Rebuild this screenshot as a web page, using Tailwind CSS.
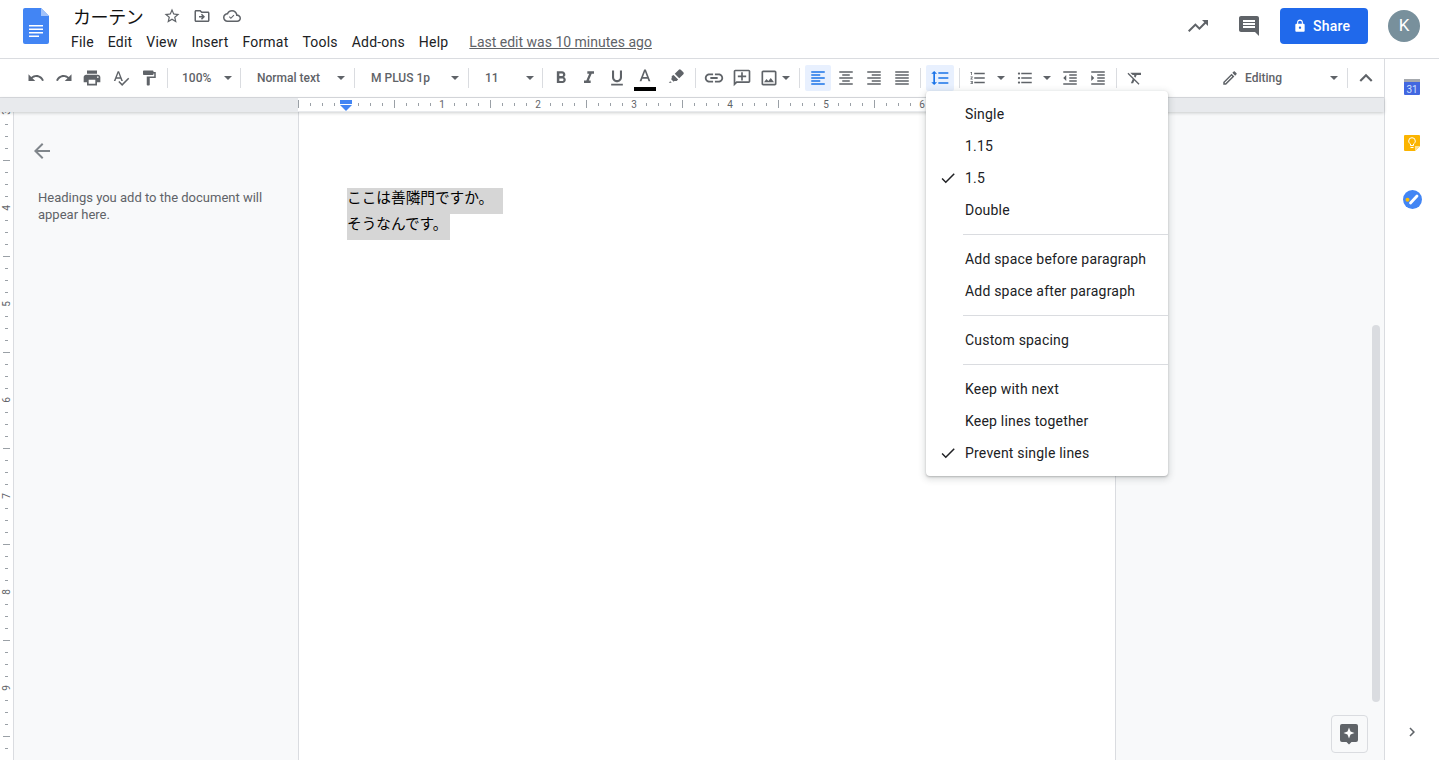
<!DOCTYPE html>
<html lang="en">
<head>
  <meta charset="UTF-8">
  <title>カーテン - Google Docs</title>
  <script src="https://cdn.jsdelivr.net/npm/@tailwindcss/browser@4"></script>
</head>
<body class="h-[760px] w-[1439px] overflow-hidden relative bg-white font-[Roboto,sans-serif] text-[#202124]">

  <!-- top bar -->
  <header class="h-[59px] border-b border-[#dadce0] flex items-start">
    <svg class="w-[26px] h-[36px] ml-[23px] mt-[8px] shrink-0" viewBox="0 0 26 36">
      <path fill="#4285f4" d="M2 0h16l8 8v26a2 2 0 0 1-2 2H2a2 2 0 0 1-2-2V2a2 2 0 0 1 2-2z"/>
      <path fill="#a1c2fa" d="M18 0l8 8h-8z"/>
      <path fill="#fff" d="M6 17h14v1.6H6zM6 20.5h14v1.6H6zM6 24h14v1.6H6zM6 27.5h10v1.6H6z"/>
    </svg>
    <div class="ml-[22px] shrink-0">
      <div class="flex items-center h-[32px]">
        <span class="text-[18px] leading-[30px] tracking-[-.4px] ml-[2px] w-[90px] font-['Noto_Sans_CJK_JP',sans-serif] text-[#111]">カーテン</span>
        <svg class="w-[18px] h-[18px] fill-[#5f6368]" viewBox="0 0 24 24"><path d="M22 9.24l-7.19-.62L12 2 9.19 8.63 2 9.24l5.46 4.73L5.82 21 12 17.27 18.18 21l-1.63-7.03L22 9.24zM12 15.4l-3.76 2.27 1-4.28-3.32-2.88 4.38-.38L12 6.1l1.71 4.04 4.38.38-3.32 2.88 1 4.28L12 15.4z"/></svg>
        <svg class="w-[18px] h-[18px] fill-[#5f6368] ml-[12px]" viewBox="0 0 24 24"><path d="M20 6h-8l-2-2H4c-1.1 0-2 .9-2 2v12c0 1.1.9 2 2 2h16c1.1 0 2-.9 2-2V8c0-1.1-.9-2-2-2zm0 12H4V6h5.17l2 2H20v10zM12.16 12H8v2h4.16l-1.6 1.59L12 17l4-4-4-4-1.41 1.41z"/></svg>
        <svg class="w-[18px] h-[18px] fill-[#5f6368] ml-[12px]" viewBox="0 0 24 24"><path d="M19.35 10.04C18.67 6.59 15.64 4 12 4 9.11 4 6.6 5.64 5.35 8.04 2.34 8.36 0 10.91 0 14c0 3.31 2.69 6 6 6h13c2.76 0 5-2.24 5-5 0-2.64-2.05-4.78-4.65-4.96zM19 18H6c-2.21 0-4-1.79-4-4s1.79-4 4-4h.71C7.37 7.69 9.48 6 12 6c3.04 0 5.5 2.46 5.5 5.5v.5H19c1.66 0 3 1.34 3 3s-1.34 3-3 3zM10.5 16l-2.6-2.6 1-1 1.6 1.6 3.6-3.6 1 1z"/></svg>
      </div>
      <nav class="flex items-center gap-[14px] text-[14px] tracking-[.2px] leading-[20px] text-[#202124]">
        <span>File</span><span>Edit</span><span>View</span><span>Insert</span><span>Format</span><span>Tools</span><span>Add-ons</span><span>Help</span>
        <span class="ml-[7px] text-[#5f6368] underline tracking-normal">Last edit was 10 minutes ago</span>
      </nav>
    </div>
    <div class="ml-auto flex items-center h-[36px] mt-[8px]">
      <svg class="w-[24px] h-[24px] fill-[#5f6368]" viewBox="0 0 24 24"><path d="M16 6l2.29 2.29-4.88 4.88-4-4L2 16.59 3.41 18l6-6 4 4 6.3-6.29L22 12V6z"/></svg>
      <svg class="w-[24px] h-[24px] fill-[#5f6368] ml-[27px]" viewBox="0 0 24 24"><path d="M21.99 4c0-1.1-.89-2-1.99-2H4c-1.1 0-2 .9-2 2v12c0 1.1.9 2 2 2h14l4 4-.01-18zM18 14H6v-2h12v2zm0-3H6V9h12v2zm0-3H6V6h12v2z"/></svg>
      <button class="ml-[19px] w-[88px] h-[36px] rounded-[4px] bg-[#2069eb] text-white text-[14px] font-medium tracking-[.2px] flex items-center pl-[13px]">
        <svg class="w-[14px] h-[14px] fill-white mr-[6px]" viewBox="0 0 24 24"><path d="M18 8h-1V6c0-2.76-2.24-5-5-5S7 3.24 7 6v2H6c-1.1 0-2 .9-2 2v10c0 1.1.9 2 2 2h12c1.1 0 2-.9 2-2V10c0-1.1-.9-2-2-2zm-6 9c-1.1 0-2-.9-2-2s.9-2 2-2 2 .9 2 2-.9 2-2 2zm3.100-9H8.900V6c0-1.710 1.390-3.100 3.100-3.100 1.710 0 3.100 1.390 3.100 3.100v2z"/></svg>
        Share
      </button>
      <div class="ml-[20px] mr-[19px] w-[32px] h-[32px] rounded-full bg-[#78909c] text-white text-[17px] flex items-center justify-center">K</div>
    </div>
  </header>

  <div class="flex h-[701px]">
    <div class="w-[1384px] shrink-0 flex flex-col">

      <!-- toolbar -->
      <div class="h-[39px] pb-[1px] flex items-center pl-[22px] text-[12px] font-medium text-[#5f6368] border-b border-[#dadce0]">
        <div class="w-[28px] flex justify-center"><svg class="w-[18px] h-[18px] fill-[#5f6368]" viewBox="0 0 24 24"><path d="M12.5 8c-2.65 0-5.05.99-6.9 2.600L2 7v9h9l-3.620-3.620c1.390-1.160 3.160-1.880 5.120-1.880 3.540 0 6.550 2.310 7.600 5.500l2.370-.780C21.080 11.030 17.150 8 12.500 8z"/></svg></div>
        <div class="w-[28px] flex justify-center"><svg class="w-[18px] h-[18px] fill-[#5f6368]" viewBox="0 0 24 24"><path d="M18.400 10.600C16.550 8.990 14.150 8 11.500 8c-4.650 0-8.580 3.030-9.960 7.220L3.900 16c1.050-3.190 4.050-5.500 7.600-5.500 1.950 0 3.730.72 5.120 1.880L13 16h9V7l-3.600 3.600z"/></svg></div>
        <div class="w-[28px] flex justify-center"><svg class="w-[20px] h-[20px] fill-[#5f6368]" viewBox="0 0 24 24"><path d="M19 8H5c-1.660 0-3 1.340-3 3v6h4v4h12v-4h4v-6c0-1.660-1.340-3-3-3zm-3 11H8v-5h8v5zm3-7c-.55 0-1-.45-1-1s.45-1 1-1 1 .45 1 1-.45 1-1 1zm-1-9H6v4h12V3z"/></svg></div>
        <div class="w-[28px] ml-[1px] flex justify-center"><svg class="w-[18px] h-[18px] fill-[#5f6368]" viewBox="0 0 24 24"><path d="M12.450 16h2.090L9.430 3H7.570L2.460 16h2.090l1.120-3h5.640l1.140 3zm-6.020-5L8.500 5.480 10.570 11H6.430zm15.160.59l-8.090 8.090L9.830 16l-1.410 1.410 5.090 5.090L23 13l-1.410-1.410z"/></svg></div>
        <div class="w-[28px] flex justify-center"><svg class="w-[18px] h-[18px] fill-[#5f6368]" viewBox="0 0 24 24"><path d="M18 4V3c0-.55-.45-1-1-1H5c-.55 0-1 .45-1 1v4c0 .55.45 1 1 1h12c.55 0 1-.45 1-1V6h1v4H9v11c0 .55.45 1 1 1h2c.55 0 1-.45 1-1v-9h8V4h-3z"/></svg></div>
        <div class="w-px h-[20px] bg-[#dadce0] ml-[4px]"></div>
        <div class="w-[72px] flex items-center justify-between pl-[14px] pr-[8px]"><span>100%</span><i class="w-0 h-0 border-x-[4px] border-t-[4px] border-x-transparent border-t-[#5f6368]"></i></div>
        <div class="w-px h-[20px] bg-[#dadce0]"></div>
        <div class="w-[113px] flex items-center justify-between pl-[16px] pr-[9px]"><span>Normal text</span><i class="w-0 h-0 border-x-[4px] border-t-[4px] border-x-transparent border-t-[#5f6368]"></i></div>
        <div class="w-px h-[20px] bg-[#dadce0]"></div>
        <div class="w-[113px] flex items-center justify-between pl-[16px] pr-[9px]"><span>M PLUS 1p</span><i class="w-0 h-0 border-x-[4px] border-t-[4px] border-x-transparent border-t-[#5f6368]"></i></div>
        <div class="w-px h-[20px] bg-[#dadce0]"></div>
        <div class="w-[73px] flex items-center justify-between pl-[16px] pr-[8px]"><span>11</span><i class="w-0 h-0 border-x-[4px] border-t-[4px] border-x-transparent border-t-[#5f6368]"></i></div>
        <div class="w-px h-[20px] bg-[#dadce0]"></div>
        <div class="w-[28px] ml-[4px] flex justify-center"><svg class="w-[20px] h-[20px] fill-[#5f6368]" viewBox="0 0 24 24"><path d="M15.600 10.790c.97-.67 1.650-1.770 1.650-2.790 0-2.260-1.750-4-4-4H7v14h7.040c2.090 0 3.710-1.700 3.710-3.790 0-1.520-.86-2.820-2.150-3.420zM10 6.500h3c.83 0 1.500.67 1.500 1.500s-.67 1.500-1.500 1.500h-3v-3zm3.500 9H10v-3h3.500c.83 0 1.500.67 1.500 1.500s-.67 1.500-1.500 1.500z"/></svg></div>
        <div class="w-[28px] flex justify-center"><svg class="w-[20px] h-[20px] fill-[#5f6368]" viewBox="0 0 24 24"><path d="M10 4v3h2.210l-3.420 8H6v3h8v-3h-2.210l3.420-8H18V4z"/></svg></div>
        <div class="w-[28px] flex justify-center"><svg class="w-[20px] h-[20px] fill-[#5f6368]" viewBox="0 0 24 24"><path d="M12 17c3.310 0 6-2.690 6-6V3h-2.500v8c0 1.930-1.570 3.500-3.500 3.500S8.500 12.930 8.500 11V3H6v8c0 3.310 2.690 6 6 6zm-7 2v2h14v-2H5z"/></svg></div>
        <div class="w-[28px] flex flex-col items-center h-[26px] relative">
          <svg class="w-[20px] h-[20px] fill-[#5f6368] mt-[2px]" viewBox="0 0 24 24"><path d="M11 3L5.500 17h2.250l1.120-3h6.250l1.120 3h2.250L13 3h-2zm-1.380 9L12 5.670 14.380 12H9.620z"/></svg>
          <div class="w-[22px] h-[4px] bg-black absolute bottom-[0px]"></div>
        </div>
        <div class="w-[28px] ml-[4px] mt-[-3px] flex justify-center"><svg class="w-[18px] h-[18px] fill-[#5f6368]" viewBox="0 0 24 24"><path d="M14.500 3.500a1.800 1.800 0 0 1 2.500 0l3.500 3.500a1.800 1.800 0 0 1 0 2.500l-5.500 5.500-6-6zM7.500 10.500l6 6-2 2h-3l-1 1-3.500-3.500 1-1v-3zM3 19l2 2H1z"/></svg></div>
        <div class="w-px h-[20px] bg-[#dadce0] ml-[4px]"></div>
        <div class="w-[28px] ml-[4px] flex justify-center"><svg class="w-[22px] h-[22px] fill-[#5f6368]" viewBox="0 0 24 24"><path d="M3.900 12c0-1.710 1.390-3.100 3.100-3.100h4V7H7c-2.760 0-5 2.240-5 5s2.240 5 5 5h4v-1.900H7c-1.710 0-3.100-1.390-3.100-3.100zM8 13h8v-2H8v2zm9-6h-4v1.900h4c1.710 0 3.100 1.390 3.100 3.100s-1.390 3.100-3.100 3.100h-4V17h4c2.760 0 5-2.240 5-5s-2.240-5-5-5z"/></svg></div>
        <div class="w-[28px] flex justify-center"><svg class="w-[20px] h-[20px] fill-[#5f6368]" viewBox="0 0 24 24"><path d="M20 2H4c-1.100 0-2 .9-2 2v18l4-4h14c1.100 0 2-.9 2-2V4c0-1.100-.9-2-2-2zm0 14H5.170L4 17.170V4h16v12zM13 5h-2v4H7v2h4v4h2v-4h4V9h-4z"/></svg></div>
        <div class="w-[26px] flex justify-center"><svg class="w-[20px] h-[20px] fill-[#5f6368]" viewBox="0 0 24 24"><path d="M19 5v14H5V5h14m0-2H5c-1.100 0-2 .9-2 2v14c0 1.100.9 2 2 2h14c1.100 0 2-.9 2-2V5c0-1.100-.9-2-2-2zm-4.860 8.860l-3 3.870L9 13.140 6 17h12l-3.860-5.140z"/></svg></div>
        <i class="w-0 h-0 border-x-[4px] border-t-[4px] border-x-transparent border-t-[#5f6368]"></i>
        <div class="w-px h-[20px] bg-[#dadce0] ml-[9px]"></div>
        <div class="w-[26px] h-[26px] ml-[5px] rounded-[2px] bg-[#e8f0fe] flex items-center justify-center"><svg class="w-[18px] h-[18px] fill-[#1a73e8]" viewBox="0 0 24 24"><path d="M15 15H3v2h12v-2zm0-8H3v2h12V7zM3 13h18v-2H3v2zm0 8h18v-2H3v2zM3 3v2h18V3H3z"/></svg></div>
        <div class="w-[28px] ml-[1px] flex justify-center"><svg class="w-[18px] h-[18px] fill-[#5f6368]" viewBox="0 0 24 24"><path d="M7 15v2h10v-2H7zm-4 6h18v-2H3v2zm0-8h18v-2H3v2zm4-6v2h10V7H7zM3 3v2h18V3H3z"/></svg></div>
        <div class="w-[28px] flex justify-center"><svg class="w-[18px] h-[18px] fill-[#5f6368]" viewBox="0 0 24 24"><path d="M3 21h18v-2H3v2zm6-4h12v-2H9v2zm-6-4h18v-2H3v2zm6-4h12V7H9v2zM3 3v2h18V3H3z"/></svg></div>
        <div class="w-[28px] flex justify-center"><svg class="w-[18px] h-[18px] fill-[#5f6368]" viewBox="0 0 24 24"><path d="M3 21h18v-2H3v2zm0-4h18v-2H3v2zm0-4h18v-2H3v2zm0-4h18V7H3v2zm0-6v2h18V3H3z"/></svg></div>
        <div class="w-px h-[20px] bg-[#dadce0] ml-[4px]"></div>
        <div class="w-[28px] h-[26px] ml-[5px] rounded-[2px] bg-[#e8f0fe] flex items-center justify-center"><svg class="w-[20px] h-[20px] fill-[#1a73e8]" viewBox="0 0 24 24"><path d="M6 7h2.500L5 3.500 1.500 7H4v10H1.500L5 20.500 8.500 17H6V7zm4-2v2h12V5H10zm0 14h12v-2H10v2zm0-6h12v-2H10v2z"/></svg></div>
        <div class="w-px h-[20px] bg-[#dadce0] ml-[5px]"></div>
        <div class="w-[28px] ml-[4px] flex justify-center"><svg class="w-[18px] h-[18px] fill-[#5f6368]" viewBox="0 0 24 24"><path d="M2 17h2v.5H3v1h1v.5H2v1h3v-4H2v1zm1-9h1V4H2v1h1v3zm-1 3h1.800L2 13.100v.9h3v-1H3.200L5 10.900V10H2v1zm5-6v2h14V5H7zm0 14h14v-2H7v2zm0-6h14v-2H7v2z"/></svg></div>
        <i class="w-0 h-0 border-x-[4px] border-t-[4px] border-x-transparent border-t-[#5f6368] ml-[5px]"></i>
        <div class="w-[28px] ml-[6px] flex justify-center"><svg class="w-[18px] h-[18px] fill-[#5f6368]" viewBox="0 0 24 24"><path d="M4 10.500c-.83 0-1.500.67-1.500 1.500s.67 1.500 1.500 1.500 1.500-.67 1.500-1.500-.67-1.500-1.500-1.500zm0-6c-.83 0-1.500.67-1.500 1.500S3.170 7.500 4 7.500 5.500 6.830 5.500 6 4.830 4.500 4 4.500zm0 12c-.83 0-1.500.68-1.500 1.500s.68 1.500 1.500 1.500 1.500-.68 1.500-1.500-.67-1.500-1.500-1.500zM7 19h14v-2H7v2zm0-6h14v-2H7v2zm0-8v2h14V5H7z"/></svg></div>
        <i class="w-0 h-0 border-x-[4px] border-t-[4px] border-x-transparent border-t-[#5f6368] ml-[4px]"></i>
        <div class="w-[28px] ml-[5px] flex justify-center"><svg class="w-[18px] h-[18px] fill-[#5f6368]" viewBox="0 0 24 24"><path d="M11 17h10v-2H11v2zm-8-5l4 4V8l-4 4zm0 9h18v-2H3v2zM3 3v2h18V3H3zm8 6h10V7H11v2zm0 4h10v-2H11v2z"/></svg></div>
        <div class="w-[28px] flex justify-center"><svg class="w-[18px] h-[18px] fill-[#5f6368]" viewBox="0 0 24 24"><path d="M3 21h18v-2H3v2zM3 8v8l4-4-4-4zm8 9h10v-2H11v2zM3 3v2h18V3H3zm8 6h10V7H11v2zm0 4h10v-2H11v2z"/></svg></div>
        <div class="w-px h-[20px] bg-[#dadce0] ml-[4px]"></div>
        <div class="w-[28px] ml-[4px] flex justify-center"><svg class="w-[18px] h-[18px] fill-[#5f6368]" viewBox="0 0 24 24"><path d="M3.270 5L2 6.270l6.970 6.970L6.500 19h3l1.570-3.660L16.730 21 18 19.730 3.550 5.270 3.270 5zM6 5v.18L8.820 8h2.400l-.72 1.680 2.100 2.100L14.210 8H20V5H6z"/></svg></div>
        <div class="flex items-center ml-[72px]">
          <svg class="w-[18px] h-[18px] fill-[#5f6368] mr-[6px]" viewBox="0 0 24 24"><path d="M14.060 9.020l.92.92L5.920 19H5v-.92l9.060-9.060M17.660 3c-.25 0-.51.1-.7.29l-1.830 1.830 3.750 3.750 1.830-1.830c.39-.39.39-1.020 0-1.410l-2.340-2.340c-.2-.2-.45-.29-.71-.29zm-3.600 3.190L3 17.250V21h3.750L17.810 9.940l-3.750-3.750z"/></svg>
          <span class="w-[85px]">Editing</span>
          <i class="w-0 h-0 border-x-[4px] border-t-[4px] border-x-transparent border-t-[#5f6368]"></i>
        </div>
        <div class="w-px h-[20px] bg-[#dadce0] ml-[9px]"></div>
        <svg class="w-[26px] h-[26px] fill-[#5f6368] ml-[5px]" viewBox="0 0 24 24"><path d="M12 8l-6 6 1.410 1.410L12 10.830l4.590 4.580L18 14z"/></svg>
      </div>

      <!-- horizontal ruler -->
      <svg class="w-[1384px] h-[14px] shrink-0 relative z-10 shadow-[0_1px_3px_rgba(60,64,67,.25)] font-[Roboto,sans-serif]" viewBox="0 0 1384 14">
        <defs>
          <pattern id="hticks" x="346" y="0" width="96" height="14" patternUnits="userSpaceOnUse">
            <path stroke="#9aa0a6" stroke-width="1" d="M12.500 5v3M24.500 5v3M36.500 5v3M48.500 2v8M60.500 5v3M72.500 5v3M84.500 5v3"/>
          </pattern>
        </defs>
        <rect width="1384" height="14" fill="#e8eaed"/>
        <rect x="298" y="0" width="818" height="13" fill="#fff"/>
        <rect x="298" y="0" width="818" height="13" fill="url(#hticks)"/>
        <g font-size="10" fill="#5f6368" text-anchor="middle">
          <text x="442" y="10">1</text><text x="538" y="10">2</text><text x="634" y="10">3</text><text x="730" y="10">4</text><text x="826" y="10">5</text><text x="922" y="10">6</text>
        </g>
        <rect x="340" y="2" width="12" height="4" fill="#4285f4"/>
        <path d="M340 7h12l-6 6z" fill="#4285f4"/>
      </svg>

      <div class="flex-1 flex min-h-0">
        <!-- vertical ruler -->
        <svg class="w-[14px] h-[648px] shrink-0 font-[Roboto,sans-serif]" viewBox="0 0 14 648">
          <defs>
            <pattern id="vticks" x="0" y="0" width="14" height="96" patternUnits="userSpaceOnUse">
              <path stroke="#9aa0a6" stroke-width="1" d="M5 12.500h3M5 24.500h3M5 36.500h3M3 48.500h7M5 60.500h3M5 72.500h3M5 84.500h3"/>
            </pattern>
          </defs>
          <rect width="13" height="648" fill="#fff"/>
          <rect width="13" height="648" fill="url(#vticks)"/>
          <rect x="13" width="1" height="648" fill="#dadce0"/>
          <g font-size="10" fill="#5f6368" text-anchor="middle">
            <text transform="translate(10 0) rotate(-90)">3</text>
            <text transform="translate(10 96) rotate(-90)">4</text>
            <text transform="translate(10 192) rotate(-90)">5</text>
            <text transform="translate(10 288) rotate(-90)">6</text>
            <text transform="translate(10 384) rotate(-90)">7</text>
            <text transform="translate(10 480) rotate(-90)">8</text>
            <text transform="translate(10 576) rotate(-90)">9</text>
          </g>
        </svg>

        <!-- outline sidebar -->
        <aside class="w-[284px] shrink-0 bg-[#f8f9fa] pl-[24px] pt-[27px]">
          <svg class="w-[24px] h-[24px] fill-[#80868b] ml-[-8px]" viewBox="0 0 24 24"><path d="M20 11H7.830l5.590-5.590L12 4l-8 8 8 8 1.410-1.410L7.830 13H20v-2z"/></svg>
          <p class="mt-[26px] text-[13px] leading-[17px] text-[#5f6368] w-[240px]">Headings you add to the document will appear here.</p>
        </aside>

        <!-- page -->
        <main class="w-[818px] shrink-0 bg-white border-x border-[#dadce0] pl-[48px] pt-[76px] text-[14.67px] leading-[17px] text-black font-['Noto_Sans_CJK_JP',sans-serif]">
          <div class="w-[156px] h-[26px] bg-[#d6d6d6] whitespace-nowrap">ここは善隣門ですか。</div>
          <div class="w-[103px] h-[26px] bg-[#d6d6d6] whitespace-nowrap">そうなんです。</div>
        </main>

        <div class="flex-1 bg-[#f8f9fa] relative">
          <div class="absolute left-[256px] top-[213px] w-[8px] h-[377px] rounded-full bg-[#dadce0]"></div>
          <div class="absolute left-[215px] top-[603px] w-[37px] h-[38px] rounded-[4px] border border-[#dadce0] bg-[#f8f9fa] flex items-center justify-center">
            <svg class="w-[20px] h-[22px] mr-[2px]" viewBox="0 0 20 22">
              <path fill="#5f6368" d="M3 1h14a2 2 0 0 1 2 2v14a2 2 0 0 1-2 2h-4.500L10 21.500 7.500 19H3a2 2 0 0 1-2-2V3a2 2 0 0 1 2-2z"/>
              <path fill="#fff" d="M10 4.500l1.500 4 4 1.500-4 1.500-1.500 4-1.500-4-4-1.500 4-1.500z"/>
            </svg>
          </div>
        </div>
      </div>
    </div>

    <!-- right side panel -->
    <aside class="flex-1 border-l border-[#dadce0] flex flex-col items-center pt-[20px] relative">
      <svg class="w-[16px] h-[16px]" viewBox="0 0 16 16">
        <rect width="16" height="16" rx="1" fill="#4267e0"/>
        <rect width="16" height="3" fill="#a6a9ae"/>
        <text x="8" y="13.500" font-size="10" fill="#cfe0ff" text-anchor="middle" font-family="Roboto">31</text>
      </svg>
      <svg class="w-[16px] h-[16px] mt-[40px]" viewBox="0 0 16 16">
        <path fill="#fbb400" d="M1 0h14a1 1 0 0 1 1 1v10l-5 5H1a1 1 0 0 1-1-1V1a1 1 0 0 1 1-1z"/>
        <path fill="#ffe08a" d="M16 11h-5v5z"/>
        <path fill="none" stroke="#fff" stroke-width="1" d="M6.500 10.500V9C5.300 8.300 4.700 7.300 4.700 6a3.300 3.300 0 0 1 6.600 0c0 1.300-.6 2.300-1.800 3v1.500zM6.500 12.500h3"/>
      </svg>
      <svg class="w-[19px] h-[19px] mt-[39px]" viewBox="0 0 19 19">
        <circle cx="9.500" cy="9.500" r="9.500" fill="#4285f4"/>
        <circle cx="4.500" cy="9.800" r="2" fill="#fbbc04"/>
        <path d="M7.500 13l6.500-7" stroke="#fff" stroke-width="2.800" stroke-linecap="round"/>
      </svg>
      <svg class="w-[18px] h-[18px] fill-[#5f6368] absolute top-[664px] left-[18px]" viewBox="0 0 24 24"><path d="M10 6L8.590 7.410 13.170 12l-4.580 4.590L10 18l6-6z"/></svg>
    </aside>
  </div>

  <!-- line spacing menu -->
  <div class="absolute left-[926px] top-[91px] w-[242px] h-[385px] z-20 bg-white rounded-[4px] shadow-[0_2px_6px_2px_rgba(60,64,67,.15),0_1px_2px_rgba(60,64,67,.3)] py-[7px] text-[14px] tracking-[.2px] text-[#202124]">
    <div class="h-[32px] flex items-center pl-[39px]">Single</div>
    <div class="h-[32px] flex items-center pl-[39px]">1.15</div>
    <div class="h-[32px] flex items-center pl-[13px]">
      <svg class="w-[18px] h-[18px] fill-[#202124] mr-[8px]" viewBox="0 0 24 24"><path d="M9 16.170L4.830 12l-1.420 1.410L9 19 21 7l-1.410-1.410z"/></svg>1.5
    </div>
    <div class="h-[32px] flex items-center pl-[39px]">Double</div>
    <div class="h-px bg-[#dadce0] ml-[37px] my-[8px]"></div>
    <div class="h-[32px] flex items-center pl-[39px]">Add space before paragraph</div>
    <div class="h-[32px] flex items-center pl-[39px]">Add space after paragraph</div>
    <div class="h-px bg-[#dadce0] ml-[37px] my-[8px]"></div>
    <div class="h-[32px] flex items-center pl-[39px]">Custom spacing</div>
    <div class="h-px bg-[#dadce0] ml-[37px] my-[8px]"></div>
    <div class="h-[32px] flex items-center pl-[39px]">Keep with next</div>
    <div class="h-[32px] flex items-center pl-[39px]">Keep lines together</div>
    <div class="h-[32px] flex items-center pl-[13px]">
      <svg class="w-[18px] h-[18px] fill-[#202124] mr-[8px]" viewBox="0 0 24 24"><path d="M9 16.170L4.830 12l-1.420 1.410L9 19 21 7l-1.410-1.410z"/></svg>Prevent single lines
    </div>
  </div>
</body>
</html>
